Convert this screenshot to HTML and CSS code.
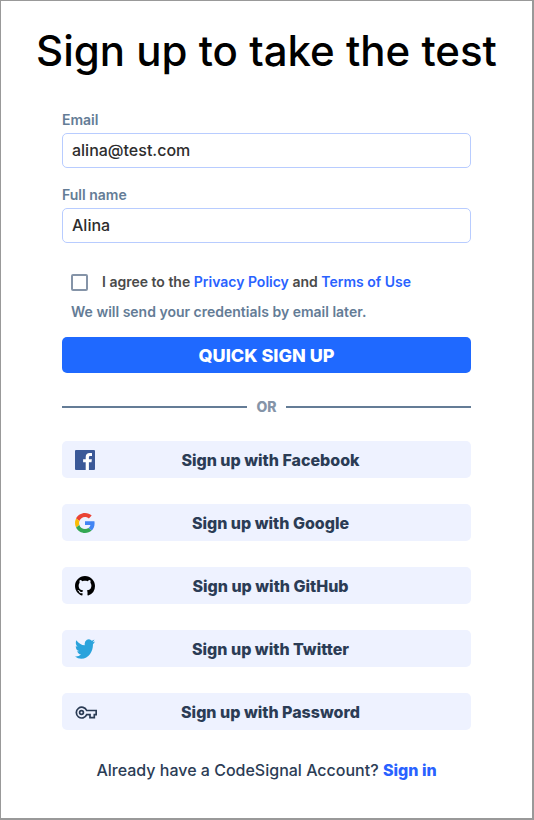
FILE: index.html
```html
<!DOCTYPE html>
<html lang="en">
<head>
<meta charset="utf-8">
<meta name="viewport" content="width=device-width, initial-scale=1">
<title>Sign up to take the test</title>
<link rel="stylesheet" href="styles.css">
</head>
<body>
<main class="dialog">
  <h1 class="title">Sign up to take the test</h1>
  <form class="form">
    <div class="field">
      <label class="field-label" for="email">Email</label>
      <input class="field-input" id="email" type="email" value="alina@test.com">
    </div>
    <div class="field">
      <label class="field-label" for="name">Full name</label>
      <input class="field-input" id="name" type="text" value="Alina">
    </div>
    <div class="agree">
      <input class="checkbox" id="agree" type="checkbox">
      <label for="agree">I agree to the <a class="link" href="#">Privacy Policy</a> and <a class="link" href="#">Terms of Use</a></label>
    </div>
    <p class="note">We will send your credentials by email later.</p>
    <button class="submit" type="submit">QUICK SIGN UP</button>
  </form>
  <div class="divider">OR</div>
  <div class="providers">
    <button class="provider" type="button">
      <svg class="icon" viewBox="0 0 20 20" aria-hidden="true"><rect width="20" height="20" rx="1" fill="#3b5998"/><path fill="#fff" d="M10.700 20v-7.700H8.100V9.300h2.600V7.100c0-2.600 1.600-4 3.900-4 1.100 0 2.100.1 2.400.1v2.700h-1.600c-1.300 0-1.500.6-1.500 1.500v1.900h3l-.4 3h-2.600V20z"/></svg>
      <span class="provider-text">Sign up with Facebook</span>
    </button>
    <button class="provider" type="button">
      <svg class="icon" viewBox="0 0 48 48" aria-hidden="true"><path fill="#ea4335" d="M24 9.500c3.540 0 6.710 1.220 9.210 3.600l6.850-6.850C35.900 2.380 30.470 0 24 0 14.620 0 6.510 5.380 2.560 13.220l7.980 6.190C12.430 13.720 17.740 9.500 24 9.500z"/><path fill="#4285f4" d="M46.980 24.550c0-1.570-.15-3.090-.38-4.550H24v9.020h12.940c-.58 2.960-2.260 5.480-4.780 7.180l7.730 6c4.510-4.180 7.090-10.360 7.090-17.650z"/><path fill="#fbbc05" d="M10.530 28.590A14.500 14.500 0 0 1 9.770 24c0-1.600.27-3.140.76-4.590l-7.980-6.190A23.900 23.900 0 0 0 0 24c0 3.880.92 7.540 2.560 10.780z"/><path fill="#34a853" d="M24 48c6.480 0 11.930-2.130 15.890-5.810l-7.730-6c-2.150 1.450-4.920 2.300-8.160 2.300-6.260 0-11.570-4.220-13.470-9.910l-7.980 6.190C6.510 42.620 14.620 48 24 48z"/></svg>
      <span class="provider-text">Sign up with Google</span>
    </button>
    <button class="provider" type="button">
      <svg class="icon" viewBox="0 0 16 16" aria-hidden="true"><path fill="#000" d="M8 0C3.580 0 0 3.580 0 8c0 3.540 2.290 6.530 5.470 7.590.4.070.55-.17.55-.38 0-.19-.01-.82-.01-1.490-2.010.37-2.530-.49-2.690-.94-.09-.23-.48-.94-.82-1.130-.28-.15-.68-.52-.01-.53.63-.01 1.080.58 1.230.82.72 1.210 1.870.87 2.330.66.07-.52.28-.87.51-1.070-1.780-.2-3.640-.89-3.640-3.950 0-.87.31-1.590.82-2.150-.08-.2-.36-1.020.08-2.120 0 0 .67-.21 2.200.82.64-.18 1.320-.27 2-.27s1.360.09 2 .27c1.530-1.040 2.200-.82 2.200-.82.44 1.100.16 1.920.08 2.120.51.56.82 1.270.82 2.150 0 3.070-1.870 3.750-3.650 3.950.29.25.54.73.54 1.480 0 1.070-.01 1.930-.01 2.200 0 .21.15.46.55.38A8.010 8.010 0 0 0 16 8c0-4.420-3.580-8-8-8z"/></svg>
      <span class="provider-text">Sign up with GitHub</span>
    </button>
    <button class="provider" type="button">
      <svg class="icon" viewBox="0 2 24 20" preserveAspectRatio="none" aria-hidden="true"><path fill="#2aa3dc" d="M23.950 4.570a10 10 0 0 1-2.820.78 4.960 4.960 0 0 0 2.160-2.730c-.95.560-2 .960-3.130 1.190a4.920 4.920 0 0 0-8.380 4.480C7.690 8.100 4.070 6.130 1.640 3.160a4.820 4.820 0 0 0-.67 2.480c0 1.710.87 3.210 2.190 4.100a4.900 4.900 0 0 1-2.230-.62v.06a4.920 4.920 0 0 0 3.950 4.830 5 5 0 0 1-2.210.08 4.940 4.940 0 0 0 4.600 3.420A9.870 9.870 0 0 1 0 19.540a14 14 0 0 0 7.550 2.210c9.050 0 14-7.500 14-13.980 0-.21 0-.42-.02-.63a9.940 9.940 0 0 0 2.460-2.550z"/></svg>
      <span class="provider-text">Sign up with Twitter</span>
    </button>
    <button class="provider" type="button">
      <svg class="icon icon-key" viewBox="0 0 22 20" aria-hidden="true"><g fill="none" stroke="#2b3c55" stroke-width="1.700"><path d="M11.700 8.500A5.400 5.400 0 1 0 11.700 12.700H15V15.600H19.300V12.700H21.200V8.500z"/><circle cx="6.500" cy="10.500" r="1.900"/></g></svg>
      <span class="provider-text">Sign up with Password</span>
    </button>
  </div>
  <p class="footer">Already have a CodeSignal Account? <a class="link footer-link" href="#">Sign in</a></p>
</main>
</body>
</html>
```
FILE: styles.css
```css
* {
  box-sizing: border-box;
}

body {
  margin: 0;
  background: #fff;
  color: #2b3c55;
  font-family: Inter, "Liberation Sans", sans-serif;
}

.dialog {
  min-height: 100vh;
  padding: 24px 61px;
  border: solid #999;
  border-width: 1px 2px 2px 1px;
}

.title {
  margin: 0 -40px 33px;
  color: #000;
  font-size: 42px;
  font-weight: 500;
  line-height: 52px;
  text-align: center;
}

.form {
  display: flex;
  flex-direction: column;
}

.field {
  display: flex;
  flex-direction: column;
  gap: 3px;
  margin-bottom: 17px;
}

.field-label {
  color: #647c96;
  font-size: 14px;
  font-weight: 600;
  line-height: 20px;
}

.field-input {
  width: 100%;
  height: 35px;
  padding: 0 9px 1px;
  border: 1px solid #b8ccff;
  border-radius: 5px;
  background: #fff;
  color: #2d2d2d;
  font: 500 16px Inter, "Liberation Sans", sans-serif;
}

.agree {
  display: flex;
  align-items: center;
  gap: 14px;
  margin: 12px 0 10px 9px;
  color: #4a4a4a;
  font-size: 14px;
  font-weight: 600;
  line-height: 20px;
}

.checkbox {
  appearance: none;
  width: 17px;
  height: 17px;
  margin: 0;
  border: 2px solid #8594a8;
  border-radius: 2px;
  background: #fff;
}

.link {
  color: #2962ff;
  text-decoration: none;
}

.note {
  margin: 0 0 15px 9px;
  color: #647c96;
  font-size: 14px;
  font-weight: 600;
  line-height: 20px;
}

.submit {
  height: 36px;
  padding: 0;
  border: 0;
  border-radius: 5px;
  background: #1f69ff;
  color: #fff;
  font: 800 18px Inter, "Liberation Sans", sans-serif;
}

.divider {
  display: flex;
  align-items: center;
  gap: 9px;
  margin: 24px 0;
  color: #8594a8;
  font-size: 14px;
  font-weight: 800;
  line-height: 20px;
}

.divider::before,
.divider::after {
  content: "";
  flex: 1;
  height: 2px;
  background: #647c96;
}

.providers {
  display: grid;
  gap: 26px;
}

.provider {
  display: grid;
  grid-template-columns: 24px 1fr 16px;
  align-items: center;
  height: 37px;
  padding: 0 13px;
  border: 0;
  border-radius: 5px;
  background: #eef2ff;
  color: #2b3c55;
  font: 800 16px Inter, "Liberation Sans", sans-serif;
}

.icon {
  width: 20px;
  height: 20px;
}

.icon-key {
  width: 22px;
}

.footer {
  margin: 30px 0 0;
  font-size: 16px;
  font-weight: 500;
  line-height: 20px;
  text-align: center;
}

.footer-link {
  font-weight: 800;
}
```
